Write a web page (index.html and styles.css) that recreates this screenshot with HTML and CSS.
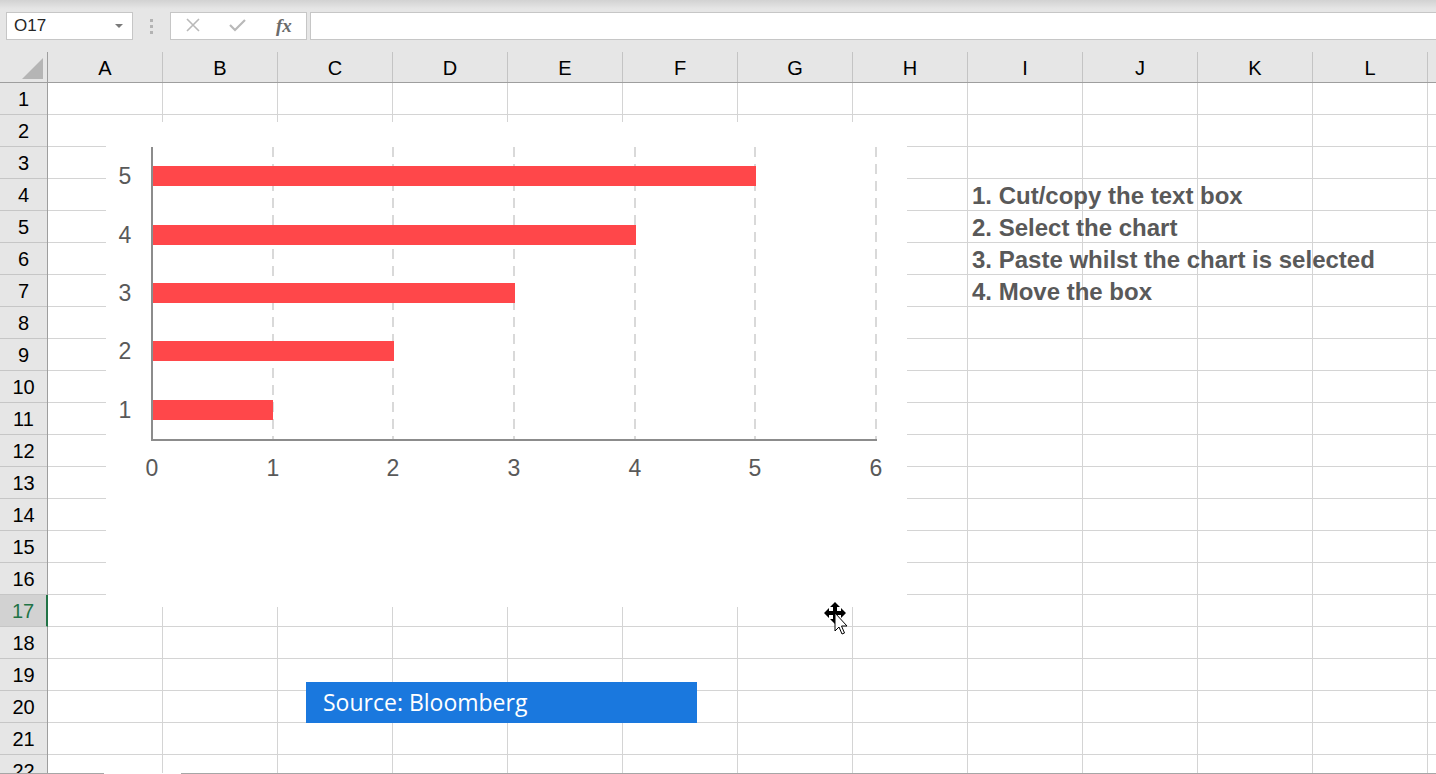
FILE: index.html
```html
<!DOCTYPE html>
<html lang="en">

<head>
  <meta charset="UTF-8">
  <meta name="viewport" content="width=device-width, initial-scale=1.0">
  <title>Chart text box</title>
  <link rel="stylesheet" href="styles.css">
</head>

<body>
  <div class="app">

    <div class="toolbar">
      <div class="namebox">
        <span>O17</span>
        <span class="caret"></span>
      </div>
      <div class="grip"><i></i><i></i><i></i></div>
      <div class="fxbtns">
        <svg class="btn" width="44" height="20" viewBox="0 0 44 20">
          <path d="M16 3 L28 15 M28 3 L16 15" stroke="#b9b9b9" stroke-width="1.6" fill="none" />
        </svg>
        <svg class="btn" width="44" height="20" viewBox="0 0 44 20">
          <path d="M15 9 L20 14 L30 4" stroke="#b9b9b9" stroke-width="2.2" fill="none" />
        </svg>
        <span class="fx">fx</span>
      </div>
      <div class="formula"></div>
    </div>

    <div class="colheads">
      <div class="corner"><span class="tri"></span></div>
      <div class="col">A</div>
      <div class="col">B</div>
      <div class="col">C</div>
      <div class="col">D</div>
      <div class="col">E</div>
      <div class="col">F</div>
      <div class="col">G</div>
      <div class="col">H</div>
      <div class="col">I</div>
      <div class="col">J</div>
      <div class="col">K</div>
      <div class="col">L</div>
      <div class="col"></div>
    </div>

    <div class="sheet">
      <div class="rowheads">
        <div class="row">1</div>
        <div class="row">2</div>
        <div class="row">3</div>
        <div class="row">4</div>
        <div class="row">5</div>
        <div class="row">6</div>
        <div class="row">7</div>
        <div class="row">8</div>
        <div class="row">9</div>
        <div class="row">10</div>
        <div class="row">11</div>
        <div class="row">12</div>
        <div class="row">13</div>
        <div class="row">14</div>
        <div class="row">15</div>
        <div class="row">16</div>
        <div class="row active">17</div>
        <div class="row">18</div>
        <div class="row">19</div>
        <div class="row">20</div>
        <div class="row">21</div>
        <div class="row">22</div>
      </div>
      <div class="cells"></div>
    </div>

    <div class="tabs">
      <span class="edge first"></span>
      <span class="tab"></span>
      <span class="edge"></span>
    </div>

    <!-- floating objects on the sheet -->
    <div class="chart">
      <svg width="801" height="485" viewBox="0 0 801 485">
        <g stroke="#d9d9d9" stroke-width="2" stroke-dasharray="10 7">
          <line x1="167" y1="25" x2="167" y2="317" />
          <line x1="287" y1="25" x2="287" y2="317" />
          <line x1="408" y1="25" x2="408" y2="317" />
          <line x1="529" y1="25" x2="529" y2="317" />
          <line x1="649" y1="25" x2="649" y2="317" />
          <line x1="770" y1="25" x2="770" y2="317" />
        </g>
        <g fill="#ff474a">
          <rect x="47" y="44" width="603" height="20" />
          <rect x="47" y="103" width="483" height="20" />
          <rect x="47" y="161" width="362" height="20" />
          <rect x="47" y="219" width="241" height="20" />
          <rect x="47" y="278" width="120" height="20" />
        </g>
        <rect x="45" y="25" width="2" height="294" fill="#8c8c8c" />
        <rect x="45" y="317" width="726" height="2" fill="#8c8c8c" />
        <g class="lbl" text-anchor="middle">
          <text x="19" y="62">5</text>
          <text x="19" y="121">4</text>
          <text x="19" y="179">3</text>
          <text x="19" y="237">2</text>
          <text x="19" y="296">1</text>
          <text x="46" y="354">0</text>
          <text x="167" y="354">1</text>
          <text x="287" y="354">2</text>
          <text x="408" y="354">3</text>
          <text x="529" y="354">4</text>
          <text x="649" y="354">5</text>
          <text x="770" y="354">6</text>
        </g>
      </svg>
    </div>

    <div class="steps">
      <p>1. Cut/copy the text box</p>
      <p>2. Select the chart</p>
      <p>3. Paste whilst the chart is selected</p>
      <p>4. Move the box</p>
    </div>

    <div class="source">Source: Bloomberg</div>

    <svg class="cursor" width="30" height="40" viewBox="0 0 30 40">
      <path d="M12 0 L17 5 L14 5 L14 9 L18 9 L18 6 L23 11 L18 16 L18 13 L14 13 L14 17 L17 17 L12 22 L7 17 L10 17 L10 13 L6 13 L6 16 L1 11 L6 6 L6 9 L10 9 L10 5 L7 5 Z" fill="#000" />
      <path d="M12 11 L12 29 L16 25 L19 32 L21.5 31 L18.5 24 L24 24 Z" fill="#fff" stroke="#000" stroke-width="1" stroke-linejoin="round" />
    </svg>

  </div>
</body>

</html>
```

FILE: styles.css
```css
* {
  padding: 0;
  border: 0;
  margin: 0;
  box-sizing: border-box;
}

body {
  font-family: "Liberation Sans", Arial, sans-serif;
  background-color: white;
  overflow: hidden;
}

.app {
  position: relative;
  width: 1436px;
  height: 774px;
  overflow: hidden;
}

/* formula bar */

.toolbar {
  height: 52px;
  display: flex;
  align-items: flex-start;
  padding-top: 12px;
  background: linear-gradient(#d2d2d2, #e6e6e6 9px);
}

.namebox {
  margin-left: 6px;
  width: 127px;
  height: 28px;
  border: 1px solid #c6c6c6;
  background-color: white;
  display: flex;
  align-items: center;
  justify-content: space-between;
  padding: 0 9px 0 7px;
  font-size: 17px;
  color: #262626;
}

.caret {
  width: 0;
  height: 0;
  border-left: 4px solid transparent;
  border-right: 4px solid transparent;
  border-top: 4px solid #7a7a7a;
}

.grip {
  width: 37px;
  height: 28px;
  display: flex;
  flex-direction: column;
  align-items: center;
  justify-content: center;
  gap: 3px;
}

.grip i {
  display: block;
  width: 3px;
  height: 3px;
  background-color: #b3b3b3;
}

.fxbtns {
  width: 137px;
  height: 28px;
  border: 1px solid #c6c6c6;
  background-color: white;
  display: flex;
  align-items: center;
}

.btn {
  display: block;
  flex: none;
}

.fx {
  margin-left: 17px;
  font-family: "Liberation Serif", serif;
  font-style: italic;
  font-weight: bold;
  font-size: 19px;
  color: #6b6b6b;
}

.formula {
  flex: 1;
  margin-left: 3px;
  height: 28px;
  border: 1px solid #c6c6c6;
  border-right: 0;
  background-color: white;
}

/* headers */

.colheads {
  display: flex;
  height: 31px;
  background-color: #e6e6e6;
  border-bottom: 1px solid #9e9e9e;
}

.corner {
  flex: none;
  width: 48px;
  border-right: 1px solid #9e9e9e;
  position: relative;
}

.tri {
  position: absolute;
  right: 4px;
  bottom: 3px;
  width: 0;
  height: 0;
  border-left: 21px solid transparent;
  border-bottom: 21px solid #b5b5b5;
}

.col {
  flex: none;
  width: 115px;
  border-right: 1px solid #c4c4c4;
  display: flex;
  align-items: center;
  justify-content: center;
  font-size: 20px;
  color: #000;
  padding-top: 2px;
}

.sheet {
  display: flex;
  height: 690px;
  overflow: hidden;
}

.rowheads {
  flex: none;
  width: 48px;
  background-color: #e6e6e6;
  border-right: 1px solid #9e9e9e;
}

.row {
  height: 32px;
  border-bottom: 1px solid #c6c6c6;
  display: flex;
  align-items: center;
  justify-content: center;
  font-size: 20px;
  color: #000;
  padding-top: 2px;
}

.row.active {
  background-color: #d2d2d2;
  color: #217346;
  margin-right: -1px;
  border-right: 2px solid #217346;
}

.cells {
  flex: 1;
  height: 704px;
  background-image:
    linear-gradient(to right, transparent 114px, #d4d4d4 114px),
    linear-gradient(to bottom, transparent 31px, #d4d4d4 31px);
  background-size: 115px 100%, 100% 32px;
}

.tabs {
  display: flex;
  height: 1px;
}

.edge {
  flex: 1;
  background-color: #a6a6a6;
}

.edge.first {
  flex: none;
  width: 104px;
}

.tab {
  width: 77px;
  background-color: white;
}

/* floating objects */

.chart {
  position: absolute;
  left: 106px;
  top: 122px;
  width: 801px;
  height: 485px;
  background-color: white;
}

.chart svg {
  display: block;
}

.lbl {
  font-family: "Liberation Sans", Arial, sans-serif;
  font-size: 23px;
  fill: #595959;
}

.steps {
  position: absolute;
  left: 972px;
  top: 180px;
  font-size: 24px;
  font-weight: bold;
  line-height: 32px;
  color: #595959;
  white-space: nowrap;
}

.source {
  position: absolute;
  left: 306px;
  top: 682px;
  width: 391px;
  height: 41px;
  background-color: #1a78de;
  color: white;
  font-family: "Open Sans", sans-serif;
  font-size: 23px;
  line-height: 40px;
  padding-left: 17px;
}

.cursor {
  position: absolute;
  left: 823px;
  top: 602px;
}
```
